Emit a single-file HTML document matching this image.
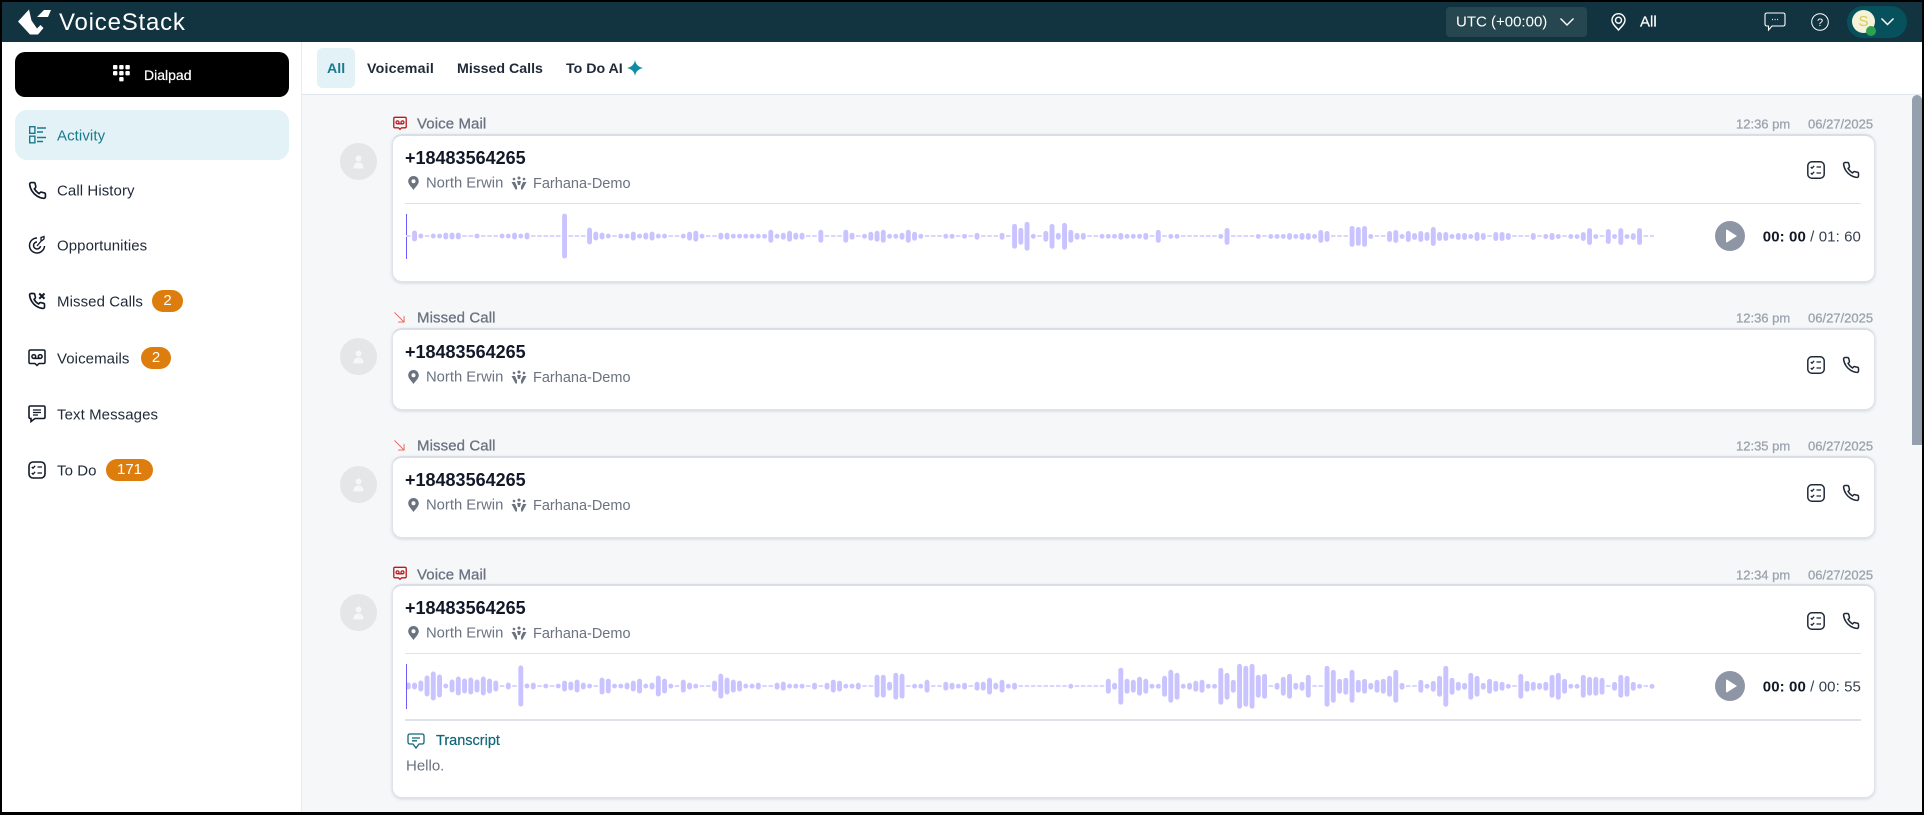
<!DOCTYPE html>
<html lang="en"><head><meta charset="utf-8"><title>VoiceStack</title>
<style>
*{box-sizing:border-box}
html,body{margin:0;padding:0;width:1924px;height:815px;overflow:hidden;background:#fff;font-family:"Liberation Sans",sans-serif}
#app{position:relative;width:1924px;height:815px;background:#fff;overflow:hidden}
.p{position:absolute;white-space:nowrap}
.t{position:absolute;white-space:nowrap;transform:translateY(-50%);line-height:1}
svg{position:absolute;display:block;overflow:visible}
.hdr{left:2px;top:2px;width:1920px;height:40px;background:#123440}
.nav{font-size:15px;letter-spacing:.08px;color:#1f2937}
.badge{position:absolute;height:22px;border-radius:11px;background:#dd7d0e;color:#fff;font-size:15px;text-align:center;line-height:22px}
.tab{font-size:14.2px;font-weight:700;color:#1f2937}
.card{position:absolute;left:392px;width:1483px;background:#fff;border:1px solid #dfe3ea;border-top:2px solid #d9dee6;border-radius:10px;box-shadow:0 1px 3px rgba(100,110,130,.25)}
.av{position:absolute;left:340px;width:37px;height:37px;border-radius:50%;background:#e5e6e7}
.lbl{font-size:15px;letter-spacing:.1px;color:#6b7280;-webkit-text-stroke:.3px #6b7280}
.tm{font-size:13px;color:#9ca3af;-webkit-text-stroke:.3px #9ca3af}
.num{font-size:18px;font-weight:700;color:#111827;left:405px}
.sub{font-size:14.8px;color:#6b7280}
.div{position:absolute;left:405px;width:1456px;height:1px;background:#dfe2e8}
.cur{position:absolute;left:406px;width:1px;height:45px;background:#6a5cff}
.play{position:absolute;left:1715px;width:30px;height:30px;border-radius:50%;background:#8e96a6}
.play:after{content:"";position:absolute;left:11px;top:8px;border-left:11px solid #fff;border-top:7px solid transparent;border-bottom:7px solid transparent;border-radius:2px}
.dur{font-size:15px;letter-spacing:.1px;color:#374151;right:63px}
.dur b{color:#111827}
</style></head><body><div id="app">

<div class="p hdr"></div>
<svg style="left:17px;top:9px" width="35" height="27" viewBox="0 0 35 27" fill="#fff"><path d="M12 .5 1 12.500 13 25.500H21L26.500 19 23.500 16 20 19.500 14.500 11.500Z"/><path d="M20 8 27 1H34L31 8Z"/></svg>
<div class="t" style="left:59px;top:23px;font-size:24px;letter-spacing:.8px;color:#fff">VoiceStack</div>

<div class="p" style="left:1446px;top:7px;width:141px;height:30px;background:#26474f;border-radius:4px"></div>
<div class="t" style="left:1456px;top:22px;font-size:15px;color:#fff">UTC (+00:00)</div>
<svg style="left:1560px;top:18px" width="14" height="8" viewBox="0 0 14 8"><path d="M.500 .500 7 7 13.500 .500" fill="none" stroke="#fff" stroke-width="1.400"/></svg>
<svg style="left:1611px;top:13px" width="15" height="18" viewBox="0 0 15 18"><path d="M7.500 17C5 14 1 10.800 1 7.200A6.500 6.500 0 0 1 14 7.200C14 10.800 10 14 7.500 17Z" fill="none" stroke="#fff" stroke-width="1.400"/><circle cx="7.500" cy="7.200" r="3" fill="none" stroke="#fff" stroke-width="1.400"/></svg>
<div class="t" style="left:1640px;top:22px;font-size:15px;color:#fff;-webkit-text-stroke:.2px #fff">All</div>
<svg style="left:1764px;top:12px" width="22" height="20" viewBox="0 0 22 20"><path d="M3 1H19Q21 1 21 3V12Q21 14 19 14H8L4.500 18V14H3Q1 14 1 12V3Q1 1 3 1Z" fill="none" stroke="#fff" stroke-width="1.100"/><path d="M8 7.500H8.900M10.600 7.500H11.500M13.200 7.500H14.100" stroke="#fff" stroke-width="1.200"/></svg>
<svg style="left:1811px;top:13px" width="18" height="18" viewBox="0 0 18 18"><circle cx="9" cy="9" r="8.300" fill="none" stroke="#fff" stroke-width="1"/><text x="9" y="13" font-family="Liberation Sans" font-size="11" fill="#fff" text-anchor="middle">?</text></svg>
<div class="p" style="left:1847px;top:6px;width:60px;height:32px;border-radius:16px;background:#06515c"></div>
<div class="p" style="left:1852px;top:10px;width:23px;height:23px;border-radius:50%;background:#f5f3d7;color:#d6c95c;font-size:15px;line-height:23px;text-align:center">S</div>
<div class="p" style="left:1866px;top:26px;width:10px;height:10px;border-radius:50%;background:#2ea04f"></div>
<svg style="left:1881px;top:18px" width="13" height="8" viewBox="0 0 13 8"><path d="M.500 .500 6.500 6.500 12.500 .500" fill="none" stroke="#fff" stroke-width="1.500"/></svg>

<!-- sidebar -->
<div class="p" style="left:301px;top:42px;width:1px;height:770px;background:#e8eaee"></div>
<div class="p" style="left:15px;top:52px;width:274px;height:45px;background:#000;border-radius:10px"></div>
<svg style="left:113px;top:65px" width="17" height="17" viewBox="0 0 17 17" fill="#fff"><rect x="0" y="0" width="4.400" height="4.400" rx="1"/><rect x="6.200" y="0" width="4.400" height="4.400" rx="1"/><rect x="12.400" y="0" width="4.400" height="4.400" rx="1"/><rect x="0" y="6" width="4.400" height="4.400" rx="1"/><rect x="6.200" y="6" width="4.400" height="4.400" rx="1"/><rect x="12.400" y="6" width="4.400" height="4.400" rx="1"/><rect x="6.200" y="12" width="4.400" height="4.400" rx="1"/></svg>
<div class="t" style="left:144px;top:75px;font-size:14px;color:#fff;-webkit-text-stroke:.2px #fff">Dialpad</div>

<div class="p" style="left:15px;top:110px;width:274px;height:50px;background:#e3f2f6;border-radius:12px"></div>
<svg style="left:29px;top:126px" width="17" height="18" viewBox="0 0 17 18" fill="none" stroke="#1a7a8c" stroke-width="1.400"><rect x=".7" y=".7" width="5.200" height="6.600"/><rect x=".7" y="10.200" width="5.200" height="6.600"/><path d="M8 2H17M8 6H14M8 11.500H17M8 15.500H14"/></svg>
<div class="t nav" style="left:57px;top:135.500px;color:#1a7a8c">Activity</div>

<svg style="left:28px;top:181px" width="19" height="19" viewBox="0 0 24 24" fill="none" stroke="#111827" stroke-width="2.100"><path d="M22 16.920v3a2 2 0 0 1-2.180 2 19.790 19.790 0 0 1-8.630-3.070 19.500 19.500 0 0 1-6-6 19.790 19.790 0 0 1-3.070-8.670A2 2 0 0 1 4.110 2h3a2 2 0 0 1 2 1.720c.13.96.36 1.900.7 2.810a2 2 0 0 1-.45 2.110L8.090 9.910a16 16 0 0 0 6 6l1.270-1.270a2 2 0 0 1 2.110-.45c.91.34 1.850.57 2.810.7A2 2 0 0 1 22 16.920z"/></svg>
<div class="t nav" style="left:57px;top:190.500px">Call History</div>

<svg style="left:28px;top:236px" width="18" height="18" viewBox="0 0 18 18" fill="none" stroke="#111827" stroke-width="1.500"><path d="M9 2A7.500 7.500 0 1 0 16.500 10"/><path d="M9 6A3.500 3.500 0 1 0 12.500 10"/><path d="M9 10 14 4M13 4.500V1.500L16 0.500V3L13.500 5" stroke-width="1.300"/></svg>
<div class="t nav" style="left:57px;top:245.500px">Opportunities</div>

<svg style="left:28px;top:292px" width="18" height="18" viewBox="0 0 24 24" fill="none" stroke="#111827" stroke-width="2.200"><path d="M22 16.920v3a2 2 0 0 1-2.180 2 19.790 19.790 0 0 1-8.630-3.070 19.500 19.500 0 0 1-6-6 19.790 19.790 0 0 1-3.070-8.670A2 2 0 0 1 4.110 2h3a2 2 0 0 1 2 1.720c.13.96.36 1.900.7 2.810a2 2 0 0 1-.45 2.110L8.090 9.910a16 16 0 0 0 6 6l1.270-1.270a2 2 0 0 1 2.110-.45c.91.34 1.850.57 2.810.7A2 2 0 0 1 22 16.920z"/><path d="M15 2 22 9M22 2 15 9" stroke-width="2.600"/></svg>
<div class="t nav" style="left:57px;top:301.500px">Missed Calls</div>
<div class="badge" style="left:152px;top:290px;width:31px">2</div>

<svg style="left:28px;top:349px" width="18" height="18" viewBox="0 0 18 18" fill="none" stroke="#111827" stroke-width="1.500"><path d="M2.500 1H15.500Q17 1 17 2.500V13Q17 14.500 15.500 14.500H11L9 16.500 7 14.500H2.500Q1 14.500 1 13V2.500Q1 1 2.500 1Z"/><circle cx="5.800" cy="7.500" r="1.900"/><circle cx="12.200" cy="7.500" r="1.900"/><path d="M5.800 9.400H12.200"/></svg>
<div class="t nav" style="left:57px;top:358.500px">Voicemails</div>
<div class="badge" style="left:141px;top:347px;width:30px">2</div>

<svg style="left:28px;top:405px" width="18" height="18" viewBox="0 0 18 18" fill="none" stroke="#111827" stroke-width="1.600"><path d="M2.500 1H15.500Q17 1 17 2.500V12Q17 13.500 15.500 13.500H7L3 16.500V13.500H2.500Q1 13.500 1 12V2.500Q1 1 2.500 1Z"/><path d="M5 5H13M5 7.500H13M5 10H10" stroke-width="1.300"/></svg>
<div class="t nav" style="left:57px;top:414.500px">Text Messages</div>

<svg style="left:28px;top:461px" width="18" height="18" viewBox="0 0 18 18" fill="none" stroke="#111827" stroke-width="1.600"><rect x="1" y="1" width="16" height="16" rx="4"/><path d="M3.800 6 5 7.200 7.200 4.800M3.800 12 5 13.200 7.200 10.800M9.500 6H14M9.500 12H14" stroke-width="1.300"/></svg>
<div class="t nav" style="left:57px;top:470.500px">To Do</div>
<div class="badge" style="left:106px;top:459px;width:47px">171</div>

<!-- tabs -->
<div class="p" style="left:302px;top:94px;width:1620px;height:718px;background:#f6f7f9;border-top:1px solid #e2e6ee"></div>
<div class="p" style="left:317px;top:48px;width:38px;height:40px;background:#e3f2f6;border-radius:6px"></div>
<div class="t tab" style="left:327px;top:68.500px;color:#1a7a8c">All</div>
<div class="t tab" style="left:367px;top:68.500px;letter-spacing:.2px">Voicemail</div>
<div class="t tab" style="left:457px;top:68.500px">Missed Calls</div>
<div class="t tab" style="left:566px;top:68.500px">To Do AI</div>
<svg style="left:627px;top:60px" width="16" height="16" viewBox="0 0 16 16"><path d="M8 0Q9 6.500 16 8 9 9.500 8 16 7 9.500 0 8 7 6.500 8 0Z" fill="#0e8ea4"/></svg>

<!-- scrollbar -->
<div class="p" style="left:1912px;top:95px;width:10px;height:350px;background:#94a0ad;border-radius:5px 5px 0 0"></div>

<!-- ITEM 1 -->
<div class="av" style="top:143px"></div>
<svg style="left:352px;top:155px" width="13" height="14" viewBox="0 0 13 14" fill="#f3f8f9"><circle cx="6.500" cy="3.500" r="3"/><path d="M1.500 13.500Q1.500 7.500 6.500 7.500 11.500 7.500 11.500 13.500Z"/></svg>
<svg style="left:393px;top:116px" width="14" height="15" viewBox="0 0 18 18" fill="none" stroke="#b91c1c" stroke-width="1.700"><path d="M2.500 1H15.500Q17 1 17 2.500V13Q17 14.500 15.500 14.500H11L9 16.500 7 14.500H2.500Q1 14.500 1 13V2.500Q1 1 2.500 1Z"/><circle cx="5.800" cy="7.500" r="1.900"/><circle cx="12.200" cy="7.500" r="1.900"/><path d="M5.800 9.400H12.200"/></svg>
<div class="t lbl" style="left:417px;top:123.500px">Voice Mail</div>
<div class="t tm" style="left:1736px;top:123.500px">12:36 pm</div>
<div class="t tm" style="left:1808px;top:123.500px">06/27/2025</div>
<div class="card" style="top:134px;height:148px"></div>
<div class="t num" style="top:158px">+18483564265</div>
<svg style="left:408px;top:176px" width="11" height="14" viewBox="0 0 11 14"><path d="M5.500 14C3.500 11 .2 8.500 .2 5.300A5.300 5.300 0 0 1 10.800 5.300C10.800 8.500 7.500 11 5.500 14Z" fill="#6b7280"/><circle cx="5.500" cy="5.300" r="2" fill="#fff"/></svg>
<div class="t sub" style="left:426px;top:183.500px">North Erwin</div>
<svg style="left:511px;top:176px" width="16" height="14" viewBox="0 0 16 14" fill="#6b7280"><circle cx="8" cy="2" r="1.500"/><circle cx="3" cy="3" r="1.300"/><circle cx="13" cy="3" r="1.300"/><path d="M.5 6 4 6 6 10.500 6 13.500 4.500 13.500ZM15.500 6 12 6 10 10.500 10 13.500 11.500 13.500ZM6 5H10L9 9H7Z"/></svg>
<div class="t sub" style="left:533px;top:183.500px;font-size:14.500px">Farhana-Demo</div>
<svg style="left:1807px;top:161px" width="18" height="18" viewBox="0 0 18 18" fill="none" stroke="#1f2937" stroke-width="1.500"><rect x=".8" y=".8" width="16.400" height="16.400" rx="4"/><path d="M3.800 6 5 7.200 7.200 4.800M3.800 12 5 13.200 7.200 10.800M9.500 6H14M9.500 12H14" stroke-width="1.300"/></svg>
<svg style="left:1842px;top:161px" width="18" height="18" viewBox="0 0 24 24" fill="none" stroke="#1f2937" stroke-width="2"><path d="M22 16.920v3a2 2 0 0 1-2.180 2 19.790 19.790 0 0 1-8.630-3.070 19.500 19.500 0 0 1-6-6 19.790 19.790 0 0 1-3.070-8.670A2 2 0 0 1 4.110 2h3a2 2 0 0 1 2 1.720c.13.96.36 1.900.7 2.810a2 2 0 0 1-.45 2.110L8.090 9.910a16 16 0 0 0 6 6l1.270-1.270a2 2 0 0 1 2.110-.45c.91.34 1.850.57 2.810.7A2 2 0 0 1 22 16.920z"/></svg>
<div class="div" style="top:203px"></div>
<div class="cur" style="top:214px"></div>
<div class="play" style="top:221px"></div>
<div class="t dur" style="top:236.500px"><b>00: 00</b> / 01: 60</div>

<!-- ITEM 2 -->
<div class="av" style="top:338px"></div>
<svg style="left:352px;top:350px" width="13" height="14" viewBox="0 0 13 14" fill="#f3f8f9"><circle cx="6.500" cy="3.500" r="3"/><path d="M1.500 13.500Q1.500 7.500 6.500 7.500 11.500 7.500 11.500 13.500Z"/></svg>
<svg style="left:394px;top:312px" width="11" height="11" viewBox="0 0 12 12" fill="none" stroke="#e0605a" stroke-width="1"><path d="M.5 .5 11 11M11 4.500V11H4.500"/></svg>
<div class="t lbl" style="left:417px;top:317.500px">Missed Call</div>
<div class="t tm" style="left:1736px;top:317.500px">12:36 pm</div>
<div class="t tm" style="left:1808px;top:317.500px">06/27/2025</div>
<div class="card" style="top:328px;height:82px"></div>
<div class="t num" style="top:352px">+18483564265</div>
<svg style="left:408px;top:370px" width="11" height="14" viewBox="0 0 11 14"><path d="M5.500 14C3.500 11 .2 8.500 .2 5.300A5.300 5.300 0 0 1 10.800 5.300C10.800 8.500 7.500 11 5.500 14Z" fill="#6b7280"/><circle cx="5.500" cy="5.300" r="2" fill="#fff"/></svg>
<div class="t sub" style="left:426px;top:377.500px">North Erwin</div>
<svg style="left:511px;top:370px" width="16" height="14" viewBox="0 0 16 14" fill="#6b7280"><circle cx="8" cy="2" r="1.500"/><circle cx="3" cy="3" r="1.300"/><circle cx="13" cy="3" r="1.300"/><path d="M.5 6 4 6 6 10.500 6 13.500 4.500 13.500ZM15.500 6 12 6 10 10.500 10 13.500 11.500 13.500ZM6 5H10L9 9H7Z"/></svg>
<div class="t sub" style="left:533px;top:377.500px;font-size:14.500px">Farhana-Demo</div>
<svg style="left:1807px;top:356px" width="18" height="18" viewBox="0 0 18 18" fill="none" stroke="#1f2937" stroke-width="1.500"><rect x=".8" y=".8" width="16.400" height="16.400" rx="4"/><path d="M3.800 6 5 7.200 7.200 4.800M3.800 12 5 13.200 7.200 10.800M9.500 6H14M9.500 12H14" stroke-width="1.300"/></svg>
<svg style="left:1842px;top:356px" width="18" height="18" viewBox="0 0 24 24" fill="none" stroke="#1f2937" stroke-width="2"><path d="M22 16.920v3a2 2 0 0 1-2.180 2 19.790 19.790 0 0 1-8.630-3.070 19.500 19.500 0 0 1-6-6 19.790 19.790 0 0 1-3.070-8.670A2 2 0 0 1 4.110 2h3a2 2 0 0 1 2 1.720c.13.96.36 1.900.7 2.810a2 2 0 0 1-.45 2.110L8.090 9.910a16 16 0 0 0 6 6l1.270-1.270a2 2 0 0 1 2.110-.45c.91.34 1.850.57 2.810.7A2 2 0 0 1 22 16.920z"/></svg>

<!-- ITEM 3 -->
<div class="av" style="top:466px"></div>
<svg style="left:352px;top:478px" width="13" height="14" viewBox="0 0 13 14" fill="#f3f8f9"><circle cx="6.500" cy="3.500" r="3"/><path d="M1.500 13.500Q1.500 7.500 6.500 7.500 11.500 7.500 11.500 13.500Z"/></svg>
<svg style="left:394px;top:440px" width="11" height="11" viewBox="0 0 12 12" fill="none" stroke="#e0605a" stroke-width="1"><path d="M.5 .5 11 11M11 4.500V11H4.500"/></svg>
<div class="t lbl" style="left:417px;top:445.500px">Missed Call</div>
<div class="t tm" style="left:1736px;top:445.500px">12:35 pm</div>
<div class="t tm" style="left:1808px;top:445.500px">06/27/2025</div>
<div class="card" style="top:456px;height:82px"></div>
<div class="t num" style="top:480px">+18483564265</div>
<svg style="left:408px;top:498px" width="11" height="14" viewBox="0 0 11 14"><path d="M5.500 14C3.500 11 .2 8.500 .2 5.300A5.300 5.300 0 0 1 10.800 5.300C10.800 8.500 7.500 11 5.500 14Z" fill="#6b7280"/><circle cx="5.500" cy="5.300" r="2" fill="#fff"/></svg>
<div class="t sub" style="left:426px;top:505.500px">North Erwin</div>
<svg style="left:511px;top:498px" width="16" height="14" viewBox="0 0 16 14" fill="#6b7280"><circle cx="8" cy="2" r="1.500"/><circle cx="3" cy="3" r="1.300"/><circle cx="13" cy="3" r="1.300"/><path d="M.5 6 4 6 6 10.500 6 13.500 4.500 13.500ZM15.500 6 12 6 10 10.500 10 13.500 11.500 13.500ZM6 5H10L9 9H7Z"/></svg>
<div class="t sub" style="left:533px;top:505.500px;font-size:14.500px">Farhana-Demo</div>
<svg style="left:1807px;top:484px" width="18" height="18" viewBox="0 0 18 18" fill="none" stroke="#1f2937" stroke-width="1.500"><rect x=".8" y=".8" width="16.400" height="16.400" rx="4"/><path d="M3.800 6 5 7.200 7.200 4.800M3.800 12 5 13.200 7.200 10.800M9.500 6H14M9.500 12H14" stroke-width="1.300"/></svg>
<svg style="left:1842px;top:484px" width="18" height="18" viewBox="0 0 24 24" fill="none" stroke="#1f2937" stroke-width="2"><path d="M22 16.920v3a2 2 0 0 1-2.180 2 19.790 19.790 0 0 1-8.630-3.070 19.500 19.500 0 0 1-6-6 19.790 19.790 0 0 1-3.070-8.670A2 2 0 0 1 4.110 2h3a2 2 0 0 1 2 1.720c.13.96.36 1.900.7 2.810a2 2 0 0 1-.45 2.110L8.090 9.910a16 16 0 0 0 6 6l1.270-1.270a2 2 0 0 1 2.110-.45c.91.34 1.850.57 2.810.7A2 2 0 0 1 22 16.920z"/></svg>

<!-- ITEM 4 -->
<div class="av" style="top:594px"></div>
<svg style="left:352px;top:606px" width="13" height="14" viewBox="0 0 13 14" fill="#f3f8f9"><circle cx="6.500" cy="3.500" r="3"/><path d="M1.500 13.500Q1.500 7.500 6.500 7.500 11.500 7.500 11.500 13.500Z"/></svg>
<svg style="left:393px;top:566px" width="14" height="15" viewBox="0 0 18 18" fill="none" stroke="#b91c1c" stroke-width="1.700"><path d="M2.500 1H15.500Q17 1 17 2.500V13Q17 14.500 15.500 14.500H11L9 16.500 7 14.500H2.500Q1 14.500 1 13V2.500Q1 1 2.500 1Z"/><circle cx="5.800" cy="7.500" r="1.900"/><circle cx="12.200" cy="7.500" r="1.900"/><path d="M5.800 9.400H12.200"/></svg>
<div class="t lbl" style="left:417px;top:574.500px">Voice Mail</div>
<div class="t tm" style="left:1736px;top:574.500px">12:34 pm</div>
<div class="t tm" style="left:1808px;top:574.500px">06/27/2025</div>
<div class="card" style="top:584px;height:214px"></div>
<div class="t num" style="top:608px">+18483564265</div>
<svg style="left:408px;top:626px" width="11" height="14" viewBox="0 0 11 14"><path d="M5.500 14C3.500 11 .2 8.500 .2 5.300A5.300 5.300 0 0 1 10.800 5.300C10.800 8.500 7.500 11 5.500 14Z" fill="#6b7280"/><circle cx="5.500" cy="5.300" r="2" fill="#fff"/></svg>
<div class="t sub" style="left:426px;top:633.500px">North Erwin</div>
<svg style="left:511px;top:626px" width="16" height="14" viewBox="0 0 16 14" fill="#6b7280"><circle cx="8" cy="2" r="1.500"/><circle cx="3" cy="3" r="1.300"/><circle cx="13" cy="3" r="1.300"/><path d="M.5 6 4 6 6 10.500 6 13.500 4.500 13.500ZM15.500 6 12 6 10 10.500 10 13.500 11.500 13.500ZM6 5H10L9 9H7Z"/></svg>
<div class="t sub" style="left:533px;top:633.500px;font-size:14.500px">Farhana-Demo</div>
<svg style="left:1807px;top:612px" width="18" height="18" viewBox="0 0 18 18" fill="none" stroke="#1f2937" stroke-width="1.500"><rect x=".8" y=".8" width="16.400" height="16.400" rx="4"/><path d="M3.800 6 5 7.200 7.200 4.800M3.800 12 5 13.200 7.200 10.800M9.500 6H14M9.500 12H14" stroke-width="1.300"/></svg>
<svg style="left:1842px;top:612px" width="18" height="18" viewBox="0 0 24 24" fill="none" stroke="#1f2937" stroke-width="2"><path d="M22 16.920v3a2 2 0 0 1-2.180 2 19.790 19.790 0 0 1-8.630-3.070 19.500 19.500 0 0 1-6-6 19.790 19.790 0 0 1-3.070-8.670A2 2 0 0 1 4.110 2h3a2 2 0 0 1 2 1.720c.13.96.36 1.900.7 2.810a2 2 0 0 1-.45 2.110L8.090 9.910a16 16 0 0 0 6 6l1.270-1.270a2 2 0 0 1 2.110-.45c.91.34 1.850.57 2.810.7A2 2 0 0 1 22 16.920z"/></svg>
<div class="div" style="top:653px"></div>
<div class="play" style="top:671px"></div>
<div class="t dur" style="top:686.500px"><b>00: 00</b> / 00: 55</div>
<div class="div" style="top:719px;height:2px"></div>
<svg style="left:407px;top:733px" width="18" height="17" viewBox="0 0 18 17" fill="none" stroke="#12677a" stroke-width="1.300"><path d="M3 1H15Q17 1 17 3V9Q17 11 15 11H12L9 15 6 11H3Q1 11 1 9V3Q1 1 3 1Z"/><path d="M5 5H13M5 7.800H10"/></svg>
<div class="t" style="left:436px;top:740.500px;font-size:14.500px;color:#12677a;-webkit-text-stroke:.2px #12677a">Transcript</div>
<div class="t" style="left:406px;top:766px;font-size:15px;color:#6b7280">Hello.</div>

<!-- waveforms (painted above the cards) -->
<svg style="left:0;top:0" width="1924" height="815" viewBox="0 0 1924 815" fill="none">
<path d="M406 236H1654" stroke="#d9d5ff" stroke-width="2" stroke-dasharray="4.500 1.750"/>
<path stroke="#c9c4ff" stroke-width="4.900" stroke-linecap="round" d="M402.050 236
m6.25 0 m6.25-3v6m0-3 m6.25 0v.01 m6.25 0 m6.25 0v.01 m6.25 0v.01 m6.25-1v2m0-1 m6.25-1v2m0-1 m6.25-1v2m0-1 m6.25 0
m6.25 0 m6.25 0v.01 m6.25 0 m6.25 0 m6.25 0 m6.25 0v.01 m6.25 0v.01 m6.25-1v2m0-1 m6.25 0v.01 m6.25-1v2m0-1
m6.25 0 m6.25 0 m6.25 0 m6.25 0 m6.25 0 m6.25-20v40m0-20 m6.25 0 m6.25 0 m6.25 0 m6.25-6v12m0-6
m6.25-2v4m0-2 m6.25-1v2m0-1 m6.25 0v.01 m6.25 0 m6.25 0v.01 m6.25 0v.01 m6.25-2v4m0-2 m6.25 0v.01 m6.25-1v2m0-1 m6.25-2v4m0-2
m6.25 0v.01 m6.25 0v.01 m6.25 0 m6.25 0 m6.25 0v.01 m6.25-2v4m0-2 m6.25-3v6m0-3 m6.25 0v.01 m6.25 0 m6.25 0
m6.25-1v2m0-1 m6.25-1v2m0-1 m6.25 0v.01 m6.25 0v.01 m6.25 0v.01 m6.25 0v.01 m6.25 0v.01 m6.25 0v.01 m6.25-4v8m0-4 m6.25 0v.01
m6.25-1v2m0-1 m6.25-3v6m0-3 m6.25-1v2m0-1
m6.25-1v2m0-1 m6.25 0 m6.25 0 m6.25-4v8m0-4 m6.25 0 m6.25 0 m6.25 0 m6.25-4v8m0-4 m6.25-1v2m0-1 m6.25 0
m6.25 0v.01 m6.25-2v4m0-2 m6.25-3v6m0-3 m6.25-4v8m0-4 m6.25 0v.01 m6.25 0v.01 m6.25-1v2m0-1 m6.25-4v8m0-4 m6.25-2v4m0-2 m6.25 0v.01
m6.25 0 m6.25 0 m6.25 0 m6.25 0v.01 m6.25 0v.01 m6.25 0 m6.25 0v.01 m6.25 0 m6.25-1v2m0-1 m6.25 0
m6.25 0 m6.25 0 m6.25-1v2m0-1 m6.25 0 m6.25-10v20m0-10 m6.25-6v12m0-6 m6.25-12v24m0-12 m6.25 0v.01 m6.25 0 m6.25-3v6m0-3
m6.25-10v20m0-10 m6.25-1v2m0-1 m6.25-11v22m0-11 m6.25-4v8m0-4 m6.25-1v2m0-1 m6.25-1v2m0-1 m6.25 0 m6.25 0 m6.25 0v.01 m6.25 0v.01
m6.25 0v.01 m6.25-1v2m0-1 m6.25 0v.01 m6.25 0v.01 m6.25 0v.01 m6.25-1v2m0-1 m6.25 0 m6.25-4v8m0-4 m6.25 0 m6.25 0v.01
m6.25 0v.01 m6.25 0 m6.25 0 m6.25 0
m6.25 0 m6.25 0 m6.25 0 m6.25 0v.01 m6.25-6v12m0-6 m6.25 0 m6.25 0 m6.25 0 m6.25 0 m6.25 0v.01
m6.25 0 m6.25 0v.01 m6.25 0v.01 m6.25 0v.01 m6.25-1v2m0-1 m6.25 0v.01 m6.25-1v2m0-1 m6.25-1v2m0-1 m6.25 0v.01 m6.25-4v8m0-4
m6.25-3v6m0-3 m6.25 0 m6.25 0 m6.25 0 m6.25-8v16m0-8 m6.25-7v14m0-7 m6.25-8v16m0-8 m6.25 0v.01 m6.25 0 m6.25 0
m6.25-3v6m0-3 m6.25-4v8m0-4 m6.25 0v.01 m6.25-3v6m0-3 m6.25-1v2m0-1 m6.25-3v6m0-3 m6.25-2v4m0-2 m6.25-7v14m0-7 m6.25-2v4m0-2 m6.25-2v4m0-2
m6.25 0v.01 m6.25-1v2m0-1 m6.25-1v2m0-1 m6.25 0v.01 m6.25-2v4m0-2 m6.25-1v2m0-1 m6.25 0 m6.25-2v4m0-2 m6.25-2v4m0-2 m6.25-1v2m0-1
m6.25 0 m6.25 0 m6.25 0 m6.25-1v2m0-1 m6.25 0 m6.25 0v.01 m6.25-1v2m0-1 m6.25 0v.01 m6.25 0 m6.25 0v.01
m6.25 0v.01 m6.25-2v4m0-2 m6.25-6v12m0-6 m6.25 0v.01
m6.25 0 m6.25-5v10m0-5 m6.25 0v.01 m6.25-6v12m0-6 m6.25 0v.01 m6.25-1v2m0-1 m6.25-6v12m0-6 m6.25 0 m6.25 0"/>
<path d="M406 686H1654" stroke="#d9d5ff" stroke-width="2" stroke-dasharray="4.500 1.750"/>
<path stroke="#c9c4ff" stroke-width="4.900" stroke-linecap="round" d="M402.050 686
m6.25-1v2m0-1 m6.25-1v2m0-1 m6.25-3v6m0-3 m6.25-8v16m0-8 m6.25-12v24m0-12 m6.25-9v18m0-9 m6.25 0v.01 m6.25-4v8m0-4 m6.25-7v14m0-7 m6.25-5v10m0-5
m6.25-6v12m0-6 m6.25-4v8m0-4 m6.25-7v14m0-7 m6.25-5v10m0-5 m6.25-3v6m0-3 m6.25 0 m6.25-1v2m0-1 m6.25 0 m6.25-18v36m0-18 m6.25 0v.01
m6.25-1v2m0-1 m6.25 0 m6.25 0v.01 m6.25 0 m6.25 0v.01 m6.25-3v6m0-3 m6.25-2v4m0-2 m6.25-4v8m0-4 m6.25-1v2m0-1 m6.25 0v.01
m6.25 0 m6.25-6v12m0-6 m6.25-5v10m0-5 m6.25 0v.01 m6.25 0v.01 m6.25-1v2m0-1 m6.25-3v6m0-3 m6.25-5v10m0-5 m6.25 0v.01 m6.25-1v2m0-1
m6.25-8v16m0-8 m6.25-5v10m0-5 m6.25 0v.01 m6.25 0 m6.25-4v8m0-4 m6.25-1v2m0-1 m6.25 0v.01 m6.25 0 m6.25 0 m6.25-3v6m0-3
m6.25-10v20m0-10 m6.25-6v12m0-6 m6.25-4v8m0-4 m6.25-3v6m0-3 m6.25 0v.01 m6.25 0v.01 m6.25-1v2m0-1 m6.25 0 m6.25 0 m6.25-1v2m0-1
m6.25-2v4m0-2 m6.25 0v.01 m6.25 0v.01
m6.25 0v.01 m6.25 0 m6.25-1v2m0-1 m6.25 0 m6.25-1v2m0-1 m6.25-4v8m0-4 m6.25-3v6m0-3 m6.25 0v.01 m6.25 0v.01 m6.25-1v2m0-1
m6.25 0 m6.25 0 m6.25-9v18m0-9 m6.25-9v18m0-9 m6.25-2v4m0-2 m6.25-11v22m0-11 m6.25-10v20m0-10 m6.25 0 m6.25 0v.01 m6.25 0v.01
m6.25-4v8m0-4 m6.25 0 m6.25 0 m6.25-2v4m0-2 m6.25-1v2m0-1 m6.25 0v.01 m6.25-1v2m0-1 m6.25 0 m6.25-2v4m0-2 m6.25-2v4m0-2
m6.25-6v12m0-6 m6.25-1v2m0-1 m6.25-4v8m0-4 m6.25 0v.01 m6.25-1v2m0-1 m6.25 0 m6.25 0 m6.25 0 m6.25 0 m6.25 0
m6.25 0 m6.25 0 m6.25 0 m6.25 0v.01 m6.25 0 m6.25 0 m6.25 0 m6.25 0 m6.25 0 m6.25-5v10m0-5
m6.25-1v2m0-1 m6.25-16v32m0-16 m6.25-5v10m0-5 m6.25-4v8m0-4 m6.25-7v14m0-7 m6.25-5v10m0-5 m6.25 0v.01 m6.25 0v.01 m6.25-8v16m0-8 m6.25-14v28m0-14
m6.25-11v22m0-11 m6.25 0v.01 m6.25-1v2m0-1 m6.25-3v6m0-3
m6.25-4v8m0-4 m6.25 0v.01 m6.25 0v.01 m6.25-16v32m0-16 m6.25-11v22m0-11 m6.25-4v8m0-4 m6.25-20v40m0-20 m6.25-18v36m0-18 m6.25-20v40m0-20 m6.25-9v18m0-9
m6.25-10v20m0-10 m6.25 0 m6.25-1v2m0-1 m6.25-7v14m0-7 m6.25-10v20m0-10 m6.25-1v2m0-1 m6.25-2v4m0-2 m6.25-9v18m0-9 m6.25 0 m6.25 0
m6.25-18v36m0-18 m6.25-14v28m0-14 m6.25-5v10m0-5 m6.25-6v12m0-6 m6.25-14v28m0-14 m6.25-4v8m0-4 m6.25-5v10m0-5 m6.25-1v2m0-1 m6.25-4v8m0-4 m6.25-5v10m0-5
m6.25-8v16m0-8 m6.25-14v28m0-14 m6.25-1v2m0-1 m6.25 0 m6.25 0 m6.25-4v8m0-4 m6.25 0v.01 m6.25-3v6m0-3 m6.25-8v16m0-8 m6.25-18v36m0-18
m6.25-6v12m0-6 m6.25-2v4m0-2 m6.25-1v2m0-1 m6.25-11v22m0-11 m6.25-8v16m0-8 m6.25-1v2m0-1 m6.25-5v10m0-5 m6.25-3v6m0-3 m6.25-2v4m0-2 m6.25 0v.01
m6.25 0 m6.25-10v20m0-10 m6.25-3v6m0-3 m6.25-2v4m0-2 m6.25-1v2m0-1 m6.25-2v4m0-2 m6.25-9v18m0-9 m6.25-11v22m0-11 m6.25-5v10m0-5 m6.25 0v.01
m6.25 0v.01 m6.25-9v18m0-9 m6.25-7v14m0-7 m6.25-7v14m0-7
m6.25-6v12m0-6 m6.25 0 m6.25-2v4m0-2 m6.25-9v18m0-9 m6.25-8v16m0-8 m6.25-2v4m0-2 m6.25 0v.01 m6.25 0 m6.25 0v.01"/>
</svg>
<div class="cur" style="top:664px"></div>

<!-- black frame -->
<div class="p" style="left:0;top:0;width:1924px;height:2px;background:#000"></div>
<div class="p" style="left:0;top:812px;width:1924px;height:3px;background:#000"></div>
<div class="p" style="left:0;top:0;width:2px;height:815px;background:#000"></div>
<div class="p" style="left:1922px;top:0;width:2px;height:815px;background:#000"></div>
</div></body></html>
